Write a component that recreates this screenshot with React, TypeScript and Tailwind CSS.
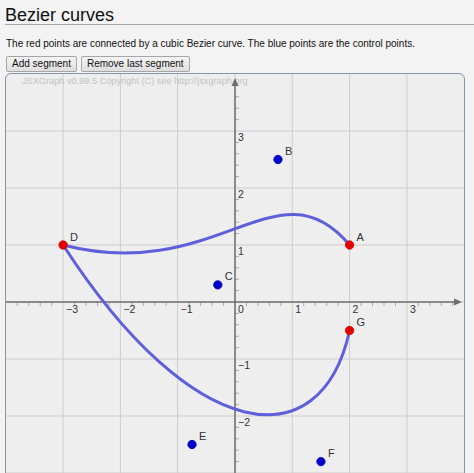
import React from 'react';

const UX = 57.3;
const UY = 57;
const OX = 235;
const OY = 302;

const px = (x: number) => OX + UX * x;
const py = (y: number) => OY - UY * y;

type Pt = { name: string; x: number; y: number; color: string };

const points: Pt[] = [
  { name: 'A', x: 2, y: 1, color: '#e00000' },
  { name: 'B', x: 0.75, y: 2.5, color: '#0000c8' },
  { name: 'C', x: -0.3, y: 0.3, color: '#0000c8' },
  { name: 'D', x: -3, y: 1, color: '#e00000' },
  { name: 'E', x: -0.75, y: -2.5, color: '#0000c8' },
  { name: 'F', x: 1.5, y: -2.8, color: '#0000c8' },
  { name: 'G', x: 2, y: -0.5, color: '#e00000' },
];

const byName = (n: string) => points.find((p) => p.name === n)!;

function bezier(a: string, b: string, c: string, d: string) {
  const [p0, p1, p2, p3] = [a, b, c, d].map(byName);
  return `M${px(p0.x)} ${py(p0.y)} C${px(p1.x)} ${py(p1.y)} ${px(p2.x)} ${py(p2.y)} ${px(p3.x)} ${py(p3.y)}`;
}

const minus = (n: number) => (n < 0 ? `\u2212${-n}` : `${n}`);

function Board() {
  const gx = [-3, -2, -1, 0, 1, 2, 3];
  const gy = [3, 2, 1, 0, -1, -2, -3];
  const minor: number[] = [];
  for (let i = -20; i <= 20; i++) if (i % 5 !== 0) minor.push(i / 5);

  return (
    <div className="ml-[5px] mt-px h-[420px] w-[460px] overflow-hidden rounded-[6px] border border-[#8795a6] bg-[#eeeeee]">
      <svg width="458" height="418" viewBox="6 74 458 418" className="block">
        {/* grid */}
        {gx.map((k) => (
          <line key={'gx' + k} x1={px(k)} y1={74} x2={px(k)} y2={492} stroke="#cdcdcd" strokeWidth="1" />
        ))}
        {gy.map((k) => (
          <line key={'gy' + k} x1={6} y1={py(k)} x2={464} y2={py(k)} stroke="#cdcdcd" strokeWidth="1" />
        ))}

        <text x="22" y="84" fontSize="9.2" fill="#c2c2c2" fontFamily="'Liberation Sans', Arial, sans-serif">
          JSXGraph v0.99.5 Copyright (C) see http://jsxgraph.org
        </text>

        {/* minor ticks */}
        {minor.map((t) =>
          px(t) > 8 && px(t) < 456 ? (
            <line key={'mx' + t} x1={px(t)} y1={OY} x2={px(t)} y2={OY + 4} stroke="#a8a8a8" strokeWidth="1" />
          ) : null
        )}
        {minor.map((t) =>
          py(t) > 84 && py(t) < 492 ? (
            <line key={'my' + t} x1={OX} y1={py(t)} x2={OX + 4} y2={py(t)} stroke="#a8a8a8" strokeWidth="1" />
          ) : null
        )}

        {/* axes */}
        <line x1={6} y1={OY} x2={455} y2={OY} stroke="#6e6e6e" strokeWidth="1.5" />
        <polygon points={`462,${OY} 454,${OY - 3.5} 454,${OY + 3.5}`} fill="#6e6e6e" />
        <line x1={OX} y1={85} x2={OX} y2={492} stroke="#6e6e6e" strokeWidth="1.5" />
        <polygon points={`${OX},78 ${OX - 3.5},86 ${OX + 3.5},86`} fill="#6e6e6e" />

        {/* tick labels */}
        <g fontSize="10.5" fill="#333" fontFamily="'Liberation Sans', Arial, sans-serif">
          {gx.map((k) => (
            <text key={'lx' + k} x={px(k) + 3} y={OY + 10.5}>
              {minus(k)}
            </text>
          ))}
          {gy
            .filter((k) => k !== 0 && k !== -3)
            .map((k) => (
              <text key={'ly' + k} x={OX + 3} y={py(k) + 10}>
                {minus(k)}
              </text>
            ))}
        </g>

        {/* curves */}
        <path d={bezier('A', 'B', 'C', 'D')} fill="none" stroke="#5f5fdc" strokeWidth="3" strokeLinecap="round" />
        <path d={bezier('D', 'E', 'F', 'G')} fill="none" stroke="#5f5fdc" strokeWidth="3" strokeLinecap="round" />

        {/* points */}
        {points.map((p) => (
          <g key={p.name}>
            <circle cx={px(p.x)} cy={py(p.y)} r="4.2" fill={p.color} stroke={p.color} strokeWidth="0.8" />
            <text
              x={px(p.x) + 7}
              y={py(p.y) - 4.5}
              fontSize="11"
              fill="#333"
              fontFamily="'Liberation Sans', Arial, sans-serif"
            >
              {p.name}
            </text>
          </g>
        ))}
      </svg>
    </div>
  );
}

export default function App() {
  return (
    <div className="min-h-[473px] overflow-hidden bg-[#f3f3f3] text-[#111]" style={{ fontFamily: "'Liberation Sans', Arial, sans-serif" }}>
      <div className="pl-[5px] pt-[6px]">
        <h1 className="border-b border-[#a9a9a9] text-[18px] font-normal leading-[18px]">Bezier curves</h1>
      </div>
      <p className="ml-[6px] mt-[13px] text-[10px] leading-[12px]">
        The red points are connected by a cubic Bezier curve. The blue points are the control points.
      </p>
      <div className="ml-[6px] mt-[6px] flex gap-[4px]">
        <button className="h-[16px] rounded-[2px] border border-[#a6a6a6] bg-gradient-to-b from-[#f4f4f4] to-[#dedede] px-[5px] text-[10px] leading-[14px] text-[#111]">
          Add segment
        </button>
        <button className="h-[16px] rounded-[2px] border border-[#a6a6a6] bg-gradient-to-b from-[#f4f4f4] to-[#dedede] px-[5px] text-[10px] leading-[14px] text-[#111]">
          Remove last segment
        </button>
      </div>
      <Board />
    </div>
  );
}
